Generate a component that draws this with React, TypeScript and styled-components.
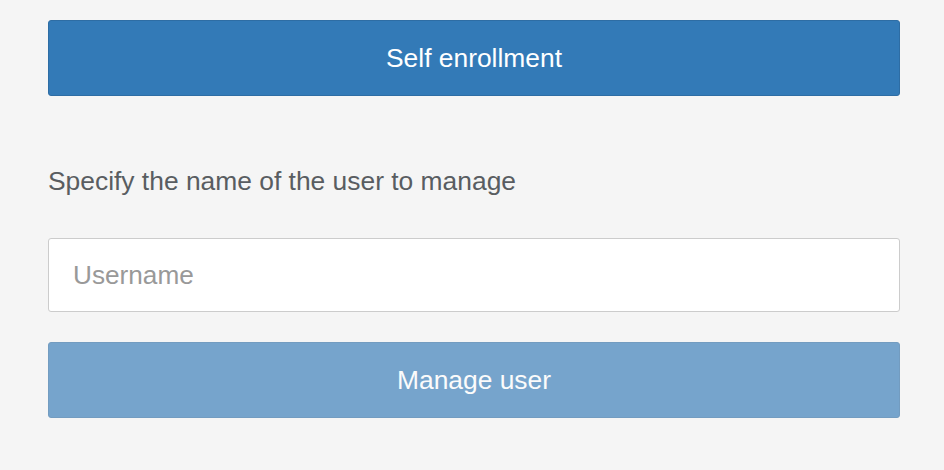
import styled, { createGlobalStyle } from "styled-components";

const GlobalStyle = createGlobalStyle`
  html, body {
    margin: 0;
    padding: 0;
    background: #f5f5f5;
  }
  body {
    font-family: "Liberation Sans", Arial, sans-serif;
  }
`;

const Page = styled.div`
  width: 852px;
  padding: 20px 44px 0 48px;
  display: flex;
  flex-direction: column;
`;

const Button = styled.button<{ disabled?: boolean }>`
  box-sizing: border-box;
  width: 100%;
  height: 76px;
  border: 1px solid #2e6da4;
  border-radius: 3px;
  background: #337ab7;
  color: #fff;
  font-family: "Liberation Sans", Arial, sans-serif;
  font-size: 26.4px;
  opacity: ${(p) => (p.disabled ? 0.65 : 1)};
  cursor: ${(p) => (p.disabled ? "not-allowed" : "pointer")};
`;

const Label = styled.p`
  margin: 65px 0 0;
  line-height: 40px;
  font-size: 26.4px;
  color: #595d61;
`;

const Field = styled.input`
  box-sizing: border-box;
  width: 100%;
  height: 74px;
  margin-top: 37px;
  padding: 0 24px;
  border: 1px solid #ccc;
  border-radius: 3px;
  background: #fff;
  font-family: "Liberation Sans", Arial, sans-serif;
  font-size: 26.2px;
  color: #555;
  outline: none;

  &::placeholder {
    color: #999;
  }
`;

const Actions = styled.div`
  margin-top: 30px;
`;

export default function App() {
  return (
    <>
      <GlobalStyle />
      <Page>
        <Button>Self enrollment</Button>
        <Label>Specify the name of the user to manage</Label>
        <Field placeholder="Username" />
        <Actions>
          <Button disabled>Manage user</Button>
        </Actions>
      </Page>
    </>
  );
}
